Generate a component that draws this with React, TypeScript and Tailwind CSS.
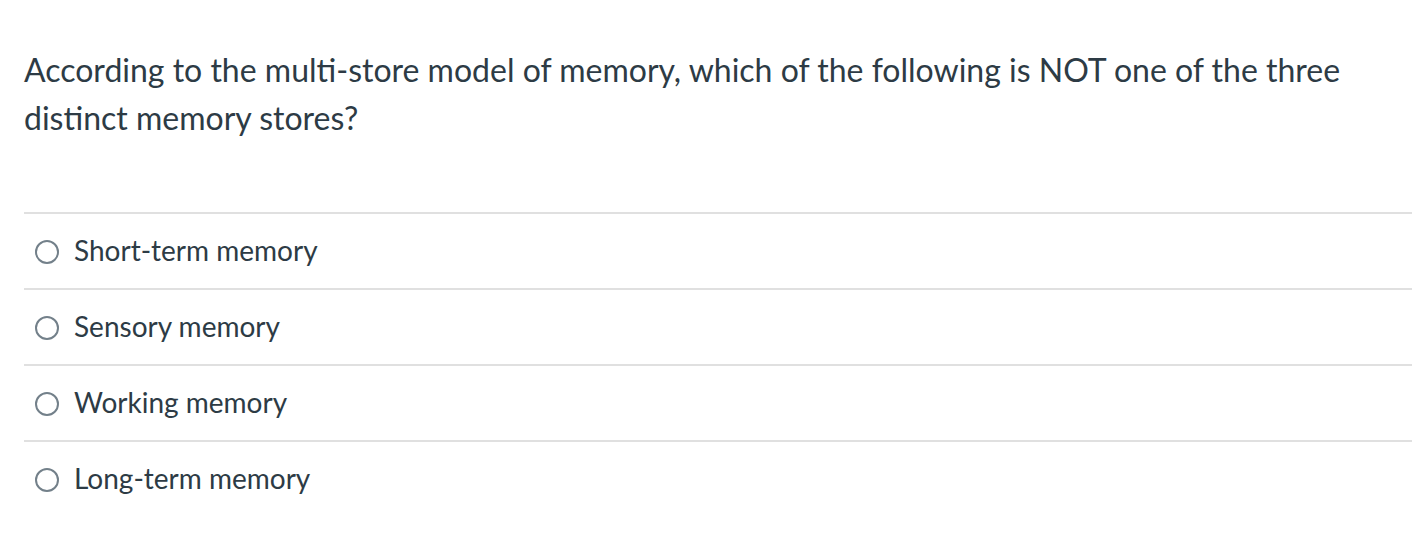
const options = ['Short-term memory', 'Sensory memory', 'Working memory', 'Long-term memory'];

export default function App() {
  return (
    <div className="w-[1428px] h-[544px] bg-white text-[#2d3b45] font-['Lato',sans-serif] pl-6 pr-4 pt-[46px]">
      <p className="text-[32px] leading-[48px] mb-[70px]">
        According to the multi-store model of memory, which of the following is NOT one of the three distinct memory
        stores?
      </p>
      <div className="w-[1388px]">
        {options.map((o) => (
          <label key={o} className="flex items-center h-[76px] border-t-2 border-[#e0e0e0] gap-[15px] pl-[11px] cursor-pointer">
            <span className="w-6 h-6 mt-[2px] rounded-full border-2 border-[#73808a] bg-white shrink-0" />
            <span className="text-[28px] mb-[3px]">{o}</span>
          </label>
        ))}
      </div>
    </div>
  );
}
